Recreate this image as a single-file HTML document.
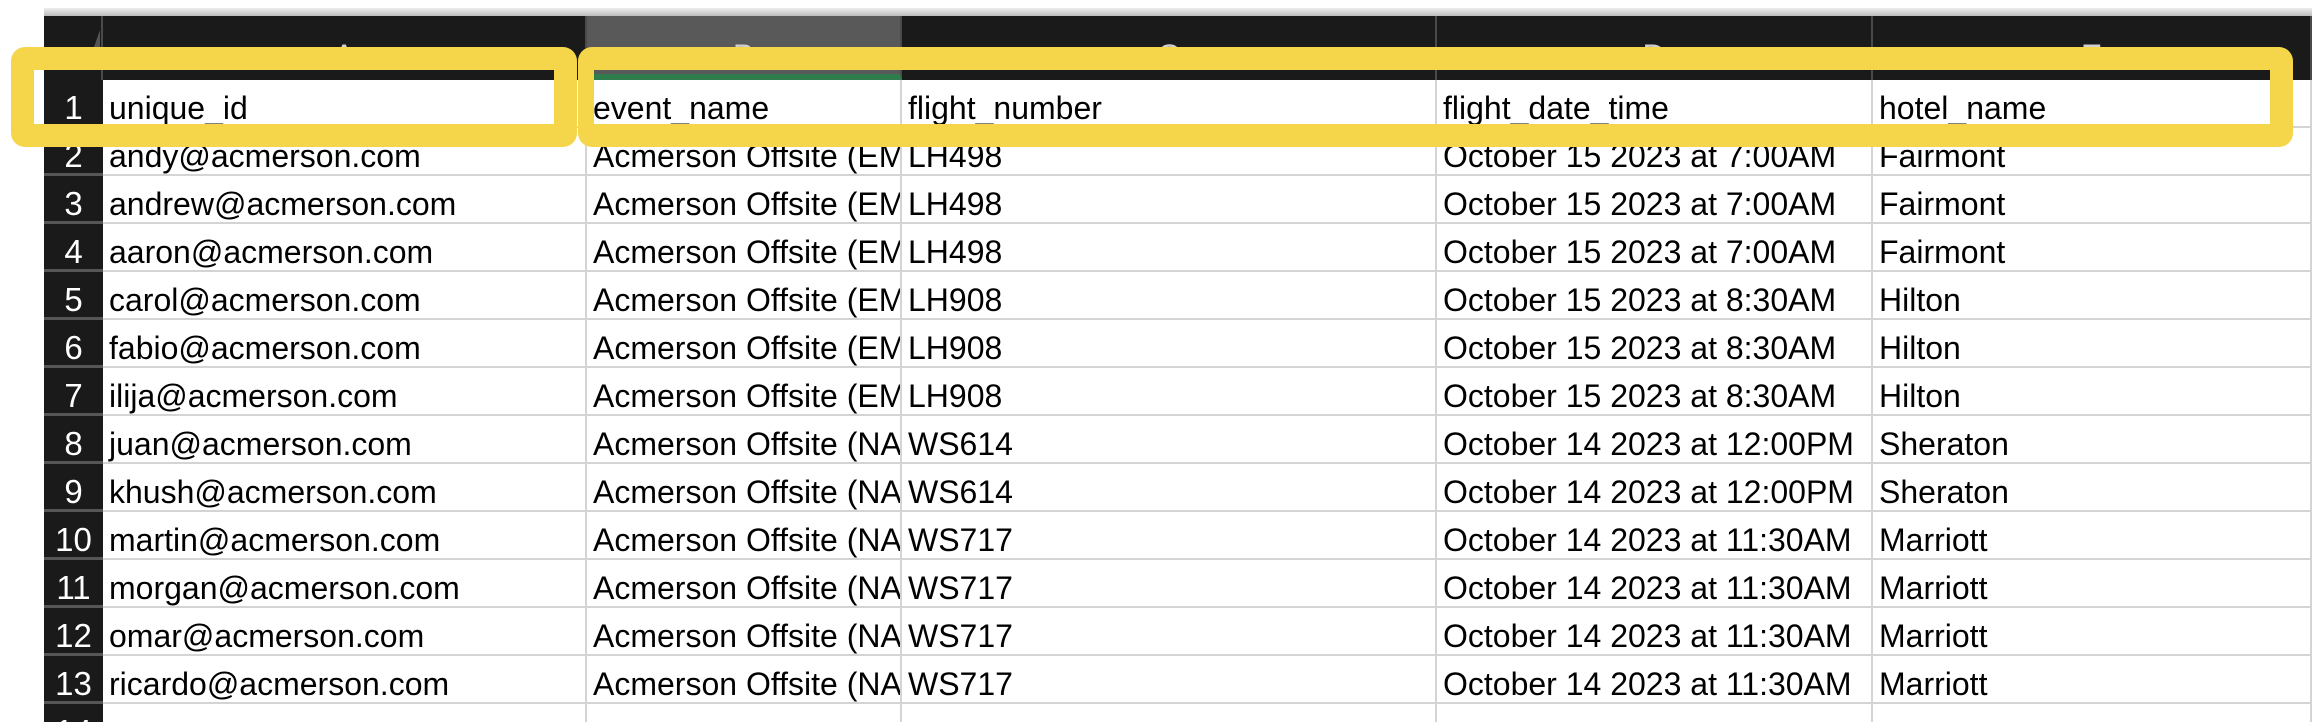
<!DOCTYPE html>
<html><head><style>
*{margin:0;padding:0;box-sizing:border-box}
html,body{width:2312px;height:722px;overflow:hidden}
body{background:#fff;position:relative;font-family:"Liberation Sans Narrow","Liberation Sans",sans-serif}
.a{position:absolute}
.hdr{position:absolute;top:16px;height:64px;background:#1a1a1a;border-right:2px solid #4a4a4a;color:#d0d0d0;font-size:32px;text-align:center;line-height:64px;padding-top:8px}
.rh{position:absolute;left:44px;width:59px;height:48px;background:#1a1a1a;border-bottom:3px solid #555;color:#fff;font-size:33px;text-align:center;line-height:48px;padding-top:4px}
.c{position:absolute;height:48px;border-right:2px solid #d4d4d4;border-bottom:2px solid #d4d4d4;font-size:32px;line-height:48px;padding-left:6px;padding-top:4px;white-space:nowrap;overflow:hidden;color:#000}
.box{position:absolute;border:23px solid #F5D64A;border-radius:14px}
</style></head><body>
<div class="a" style="left:44px;top:8px;width:2268px;height:8px;background:linear-gradient(#eee,#bbb)"></div>
<div class="hdr" style="left:44px;width:59px;background:#1a1a1a"></div>
<div class="a" style="left:86px;top:30px;width:0;height:0;border-left:14px solid transparent;border-bottom:40px solid #555"></div>
<div class="hdr" style="left:103px;width:484px">A</div>
<div class="hdr" style="left:587px;width:315px;background:#595959;border-bottom:6px solid #2f7d4c">B</div>
<div class="hdr" style="left:902px;width:535px">C</div>
<div class="hdr" style="left:1437px;width:436px">D</div>
<div class="hdr" style="left:1873px;width:439px">E</div>
<div id="g"></div>
<script>
var rows=[["unique_id","event_name","flight_number","flight_date_time","hotel_name"],
["andy@acmerson.com","Acmerson Offsite (EMEA)","LH498","October 15 2023 at 7:00AM","Fairmont"],
["andrew@acmerson.com","Acmerson Offsite (EMEA)","LH498","October 15 2023 at 7:00AM","Fairmont"],
["aaron@acmerson.com","Acmerson Offsite (EMEA)","LH498","October 15 2023 at 7:00AM","Fairmont"],
["carol@acmerson.com","Acmerson Offsite (EMEA)","LH908","October 15 2023 at 8:30AM","Hilton"],
["fabio@acmerson.com","Acmerson Offsite (EMEA)","LH908","October 15 2023 at 8:30AM","Hilton"],
["ilija@acmerson.com","Acmerson Offsite (EMEA)","LH908","October 15 2023 at 8:30AM","Hilton"],
["juan@acmerson.com","Acmerson Offsite (NA)","WS614","October 14 2023 at 12:00PM","Sheraton"],
["khush@acmerson.com","Acmerson Offsite (NA)","WS614","October 14 2023 at 12:00PM","Sheraton"],
["martin@acmerson.com","Acmerson Offsite (NA)","WS717","October 14 2023 at 11:30AM","Marriott"],
["morgan@acmerson.com","Acmerson Offsite (NA)","WS717","October 14 2023 at 11:30AM","Marriott"],
["omar@acmerson.com","Acmerson Offsite (NA)","WS717","October 14 2023 at 11:30AM","Marriott"],
["ricardo@acmerson.com","Acmerson Offsite (NA)","WS717","October 14 2023 at 11:30AM","Marriott"],
["","","","",""]];
var xs=[103,587,902,1437,1873,2312],h="";
rows.forEach(function(r,i){var t=80+i*48;
h+='<div class="rh" style="top:'+t+'px">'+(i+1)+'</div>';
r.forEach(function(v,j){h+='<div class="c" style="left:'+xs[j]+'px;top:'+t+'px;width:'+(xs[j+1]-xs[j])+'px">'+v+'</div>';});});
document.getElementById("g").innerHTML=h;
</script>
<div class="box" style="left:11px;top:47px;width:566px;height:100px"></div>
<div class="box" style="left:578px;top:47px;width:1715px;height:100px;border-left-width:16px"></div>
</body></html>
